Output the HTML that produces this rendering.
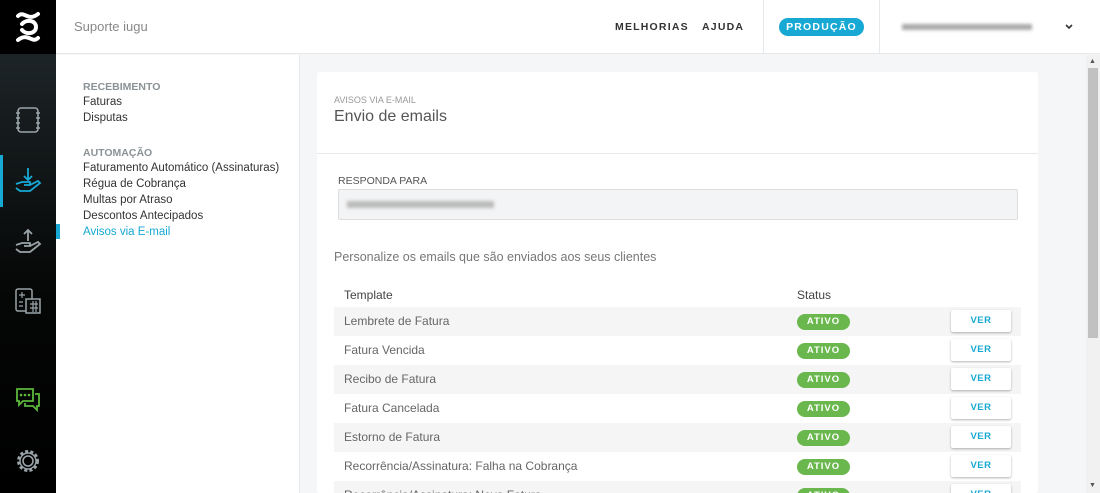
<!DOCTYPE html><html style="width:1100px;height:493px;overflow:hidden"><head><style>
*{margin:0;padding:0;box-sizing:border-box}
body{width:1100px;height:493px;overflow:hidden;font-family:"Liberation Sans",sans-serif;background:#f5f6f7;position:relative;color:#555}
.side{position:absolute;left:0;top:0;width:56px;height:493px;background:linear-gradient(#222b2e,#050606 60%,#000)}
.logo{position:absolute;left:0;top:0;width:56px;height:54px;background:#000}
.top{position:absolute;left:56px;top:0;right:0;height:54px;background:#fff;border-bottom:1px solid #e6e8ea}
.menu{position:absolute;left:56px;top:55px;width:244px;height:438px;background:#fff;border-right:1px solid #e6e8ea}
.menu .h{position:absolute;left:27px;font-size:10.5px;color:#8a9296;font-weight:bold}
.menu .i{position:absolute;left:27px;font-size:11.5px;color:#333}
.card{position:absolute;left:317px;top:72px;width:721px;height:421px;background:#fff;border-radius:3px;overflow:hidden}
.row{position:absolute;left:17px;width:687px;height:29px;font-size:12px;color:#666}
.row span.t{position:absolute;left:10px;top:7px}
.badge{position:absolute;left:463px;top:7px;width:53px;height:16px;border-radius:8px;background:#6ab74e;color:#fff;font-size:9.5px;font-weight:bold;text-align:center;line-height:16px;letter-spacing:1px}
.ver{position:absolute;left:617px;top:3px;width:60px;height:22px;background:#fff;box-shadow:0 1px 2px rgba(0,0,0,.3);border-radius:2px;color:#17a8d3;font-size:9.5px;font-weight:bold;text-align:center;line-height:22px;letter-spacing:.5px}
.ic{position:absolute;left:14px}
</style></head><body>
<div class="side">
<div class="logo"><svg width="56" height="54"><path d="M18 16c6-6 10 6 20-2M38 38c-6 6-10-6-20 2M22 24c4-5 14-4 14 3s-10 8-14 3" stroke="#fff" stroke-width="4" fill="none" stroke-linecap="round"/></svg></div>
<div style="position:absolute;left:0;top:155px;width:3px;height:52px;background:#17a8d3"></div>
<svg class="ic" style="top:106px" width="28" height="28"><rect x="4" y="2" width="20" height="24" rx="3" fill="none" stroke="#9aa4a8" stroke-width="1.6"/><path d="M2 7h4M2 12h4M2 17h4M2 22h4M22 7h4M22 12h4M22 17h4M22 22h4" stroke="#9aa4a8" stroke-width="1.4"/></svg>
<svg class="ic" style="top:166px" width="28" height="28"><path d="M14 2v12M10 10l4 4 4-4M2 18l6-2h8v3h-6M16 19l8-4 2 2-10 8H6l-4-3" stroke="#17a8d3" stroke-width="1.8" fill="none"/></svg>
<svg class="ic" style="top:227px" width="28" height="28"><path d="M14 14V3M10 7l4-4 4 4M2 18l6-2h8v3h-6M16 19l8-4 2 2-10 8H6l-4-3" stroke="#9aa4a8" stroke-width="1.8" fill="none"/></svg>
<svg class="ic" style="top:287px" width="28" height="28"><rect x="2" y="2" width="16" height="22" rx="2" fill="none" stroke="#9aa4a8" stroke-width="1.5"/><rect x="12" y="12" width="14" height="14" fill="#0a0c0c" stroke="#9aa4a8" stroke-width="1.5"/><path d="M5 8h6M8 5v6M5 15h4M5 19h4M16 17h8M16 21h8M19 14v11M22 14v11" stroke="#9aa4a8" stroke-width="1.2"/></svg>
<svg class="ic" style="top:386px" width="28" height="28"><path d="M3 3h16v12H9l-4 4v-4H3z" fill="none" stroke="#5cb83c" stroke-width="1.8"/><path d="M21 8h4v12h-2v4l-4-4h-8v-3" fill="none" stroke="#5cb83c" stroke-width="1.8"/><circle cx="7" cy="9" r="1.3" fill="#5cb83c"/><circle cx="11" cy="9" r="1.3" fill="#5cb83c"/><circle cx="15" cy="9" r="1.3" fill="#5cb83c"/></svg>
<svg class="ic" style="top:447px" width="28" height="28"><circle cx="14" cy="14" r="5" fill="none" stroke="#9aa4a8" stroke-width="1.6"/><circle cx="14" cy="14" r="9.5" fill="none" stroke="#9aa4a8" stroke-width="3" stroke-dasharray="3 2.2"/><circle cx="14" cy="14" r="8" fill="none" stroke="#9aa4a8" stroke-width="1.4"/></svg>
</div>
<div class="top">
<div style="position:absolute;left:18px;top:19px;font-size:13px;color:#888">Suporte iugu</div>
<div style="position:absolute;left:559px;top:21px;font-size:10.5px;font-weight:bold;color:#333;letter-spacing:1.2px">MELHORIAS</div>
<div style="position:absolute;left:646px;top:21px;font-size:10.5px;font-weight:bold;color:#333;letter-spacing:1.2px">AJUDA</div>
<div style="position:absolute;left:707px;top:0;width:1px;height:54px;background:#e6e8ea"></div>
<div style="position:absolute;left:723px;top:18px;width:85px;height:18px;border-radius:9px;background:#17a8d3;color:#fff;font-size:10.5px;font-weight:bold;text-align:center;line-height:18px;letter-spacing:1.2px">PRODUÇÃO</div>
<div style="position:absolute;left:823px;top:0;width:1px;height:54px;background:#e6e8ea"></div>
<div style="position:absolute;left:846px;top:24px;width:130px;height:6px;background:#aaa;filter:blur(1.5px)"></div>
<svg style="position:absolute;left:1009px;top:24px" width="8" height="6"><path d="M1 1l3 3 3-3" stroke="#333" stroke-width="1.6" fill="none"/></svg>
</div>
<div class="menu">
<div class="h" style="top:26px">RECEBIMENTO</div>
<div class="i" style="top:41px">Faturas</div>
<div class="i" style="top:57px">Disputas</div>
<div class="h" style="top:92px">AUTOMAÇÃO</div>
<div class="i" style="top:107px">Faturamento Automático (Assinaturas)</div>
<div class="i" style="top:123px">Régua de Cobrança</div>
<div class="i" style="top:139px">Multas por Atraso</div>
<div class="i" style="top:155px">Descontos Antecipados</div>
<div style="position:absolute;left:0;top:169px;width:4px;height:15px;background:#17a8d3"></div>
<div class="i" style="top:171px;color:#17a8d3">Avisos via E-mail</div>
</div>
<div class="card">
<div style="position:absolute;left:17px;top:23px;font-size:9px;color:#999">AVISOS VIA E-MAIL</div>
<div style="position:absolute;left:17px;top:36px;font-size:16px;color:#555">Envio de emails</div>
<div style="position:absolute;left:0;top:81px;width:721px;height:1px;background:#e6e8ea"></div>
<div style="position:absolute;left:21px;top:103px;font-size:10.5px;color:#555">RESPONDA PARA</div>
<div style="position:absolute;left:21px;top:117px;width:680px;height:31px;background:#f3f4f5;border:1px solid #ddd;border-radius:2px"><div style="position:absolute;left:8px;top:11px;width:147px;height:7px;background:#bbb;filter:blur(1.5px)"></div></div>
<div style="position:absolute;left:17px;top:178px;font-size:12.5px;color:#777">Personalize os emails que são enviados aos seus clientes</div>
<div style="position:absolute;left:27px;top:216px;font-size:12px;color:#444">Template</div>
<div style="position:absolute;left:480px;top:216px;font-size:12px;color:#444">Status</div>
<div class="row" style="top:235px;background:#f5f5f5"><span class="t">Lembrete de Fatura</span><div class="badge">ATIVO</div><div class="ver">VER</div></div>
<div class="row" style="top:264px"><span class="t">Fatura Vencida</span><div class="badge">ATIVO</div><div class="ver">VER</div></div>
<div class="row" style="top:293px;background:#f5f5f5"><span class="t">Recibo de Fatura</span><div class="badge">ATIVO</div><div class="ver">VER</div></div>
<div class="row" style="top:322px"><span class="t">Fatura Cancelada</span><div class="badge">ATIVO</div><div class="ver">VER</div></div>
<div class="row" style="top:351px;background:#f5f5f5"><span class="t">Estorno de Fatura</span><div class="badge">ATIVO</div><div class="ver">VER</div></div>
<div class="row" style="top:380px"><span class="t">Recorrência/Assinatura: Falha na Cobrança</span><div class="badge">ATIVO</div><div class="ver">VER</div></div>
<div class="row" style="top:409px;background:#f5f5f5"><span class="t">Recorrência/Assinatura: Nova Fatura</span><div class="badge">ATIVO</div><div class="ver">VER</div></div>
</div>
<div style="position:absolute;left:1086px;top:55px;width:14px;height:438px;background:#f1f1f1"></div>
<div style="position:absolute;left:1088px;top:68px;width:10px;height:270px;background:#c1c1c1"></div>
<div style="position:absolute;left:1089px;top:58px;font-size:7px;color:#555">▲</div>
<div style="position:absolute;left:1089px;top:482px;font-size:7px;color:#555">▼</div>
</body></html>
